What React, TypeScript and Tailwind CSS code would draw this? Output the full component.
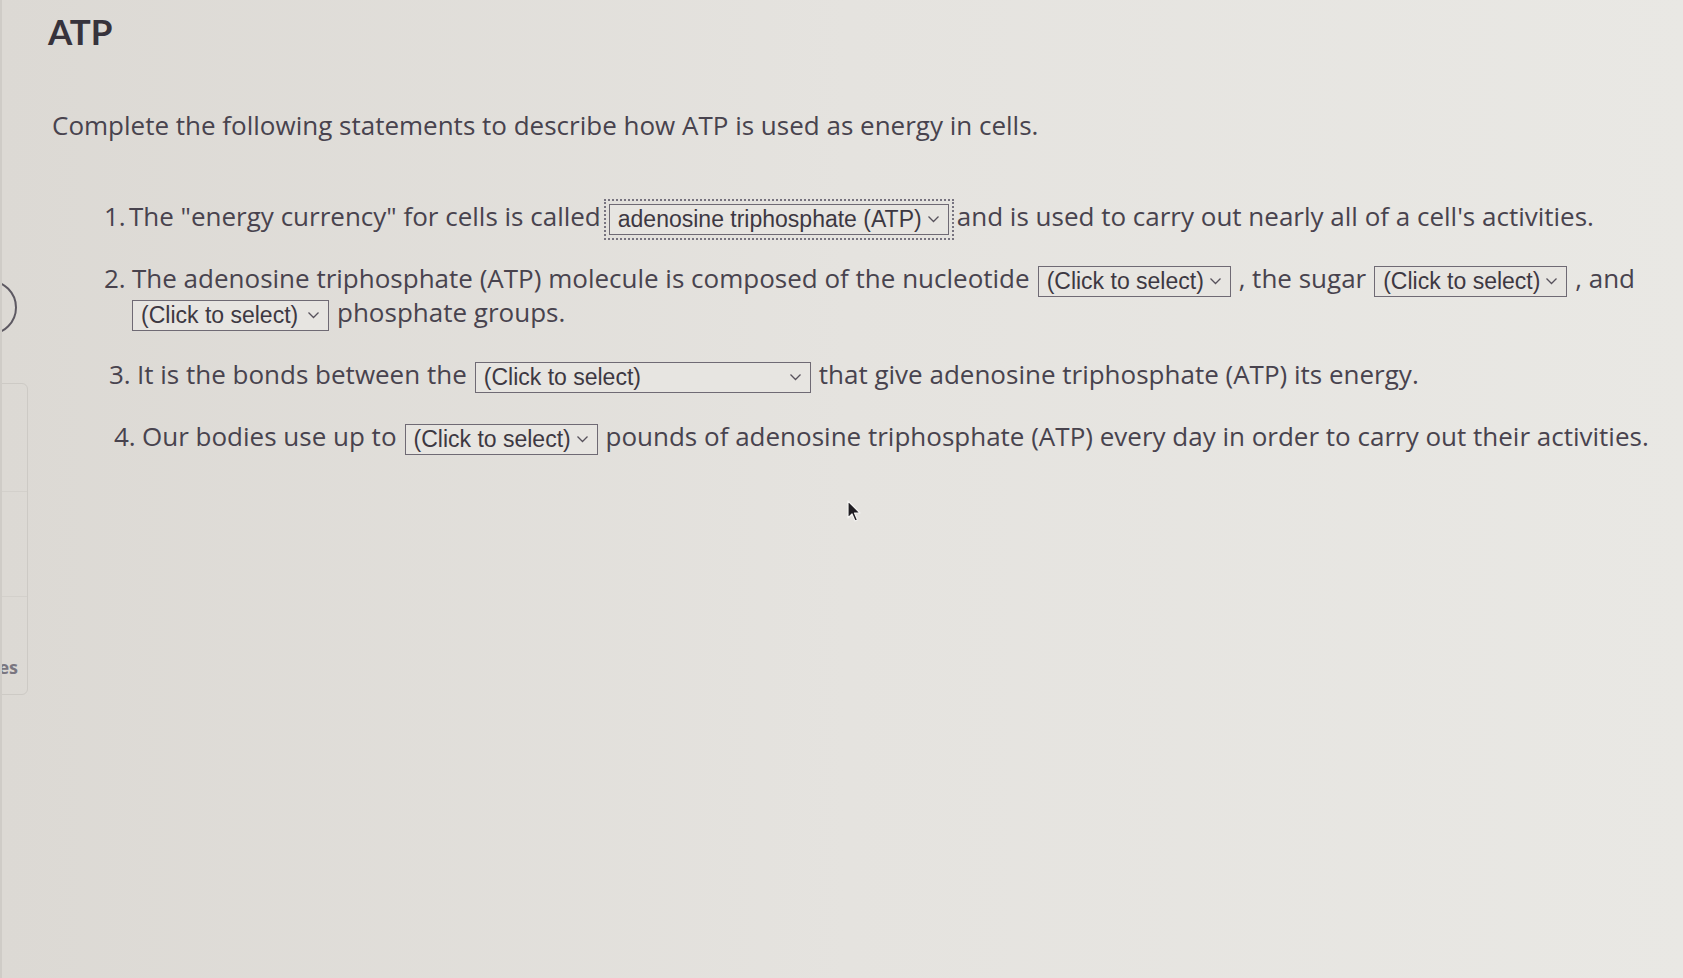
import React from 'react';

const Chevron: React.FC = () => (
    <svg width="13" height="8" viewBox="0 0 13 8" className="shrink-0">
        <path d="M1.5 1.5 L6.5 6.5 L11.5 1.5" stroke="#57525c" strokeWidth="1.3" fill="none" />
    </svg>
);

type DropProps = { label: string; width: string; focused?: boolean };

const Drop: React.FC<DropProps> = ({ label, width, focused }) => (
    <span
        className={`inline-flex items-center justify-between h-[31px] -my-[4px] align-middle mx-[8px] px-[8px] border border-[#6f6a74] bg-[#e7e5e1] text-[23px] text-[#3d3842] leading-none ${width} ${focused ? 'outline-2 outline-dotted outline-offset-[3px] outline-[#77737f]' : ''}`}
        style={{ fontFamily: '"Liberation Sans", Arial, sans-serif' }}
    >
        <span className="whitespace-nowrap">{label}</span>
        <Chevron />
    </span>
);

const SideSliver: React.FC = () => (
    <aside className="w-[36px] shrink-0 overflow-hidden flex flex-col">
        <div className="mt-[280px] -ml-[40px] w-[55px] h-[55px] shrink-0 rounded-full border-2 border-[#5d5962]" />
        <div className="mt-[48px] -ml-[40px] w-[66px] h-[312px] shrink-0 rounded-md border border-[#cdcac5] flex flex-col">
            <div className="h-[108px] shrink-0 border-b border-[#d3d0cb]" />
            <div className="h-[105px] shrink-0 border-b border-[#d3d0cb]" />
            <div className="flex-1 flex items-end justify-end pr-[9px] pb-[16px]">
                <span className="text-[18px] leading-[22px] font-bold text-[#7a7680]" style={{ fontFamily: '"Open Sans", sans-serif' }}>es</span>
            </div>
        </div>
    </aside>
);

const Cursor: React.FC = () => (
    <svg width="16" height="24" viewBox="0 0 16 24" className="absolute left-[845px] top-[500px]">
        <path d="M1 1 L1 18 L5 14 L8 21 L10.5 20 L7.5 13 L13 13 Z" fill="#1f1d22" stroke="#f4f3f1" strokeWidth="1.2" strokeLinejoin="round" />
    </svg>
);

export default function App() {
    return (
        <div
            className="relative w-full min-h-[978px] flex border-l-2 border-[#cfccc7] bg-gradient-to-r from-[#dcd9d4] via-[#e5e3df] to-[#e9e8e4] text-[#48434e]"
            style={{ fontFamily: '"Open Sans", Lato, sans-serif' }}
        >
            <SideSliver />
            <main className="flex-1 pl-[10px] pt-[11px]">
                <h1 className="text-[35px] leading-[40px] font-bold text-[#37333c]" style={{ fontFamily: 'Lato, sans-serif' }}>ATP</h1>

                <p className="mt-[57px] ml-[4px] text-[26px] leading-[34px]">
                    Complete the following statements to describe how ATP is used as energy in cells.
                </p>

                <ol className="mt-[57px] flex flex-col gap-[28px] text-[26px] leading-[34px]">
                    <li className="flex ml-[56px] whitespace-nowrap">
                        <span className="w-[25px] shrink-0">1.</span>
                        <span>
                            The "energy currency" for cells is called
                            <Drop label="adenosine triphosphate (ATP)" width="w-[340px]" focused />
                            and is used to carry out nearly all of a cell's activities.
                        </span>
                    </li>
                    <li className="flex ml-[56px] whitespace-nowrap">
                        <span className="w-[28px] shrink-0">2.</span>
                        <span>
                            The adenosine triphosphate (ATP) molecule is composed of the nucleotide
                            <Drop label="(Click to select)" width="w-[193px]" />
                            , the sugar
                            <Drop label="(Click to select)" width="w-[193px]" />
                            , and
                            <br />
                            <span className="-ml-[8px]">
                                <Drop label="(Click to select)" width="w-[197px]" />
                            </span>
                            phosphate groups.
                        </span>
                    </li>
                    <li className="flex ml-[61px] whitespace-nowrap">
                        <span className="w-[28px] shrink-0">3.</span>
                        <span>
                            It is the bonds between the
                            <Drop label="(Click to select)" width="w-[336px]" />
                            that give adenosine triphosphate (ATP) its energy.
                        </span>
                    </li>
                    <li className="flex ml-[66px] whitespace-nowrap">
                        <span className="w-[28px] shrink-0">4.</span>
                        <span>
                            Our bodies use up to
                            <Drop label="(Click to select)" width="w-[193px]" />
                            pounds of adenosine triphosphate (ATP) every day in order to carry out their activities.
                        </span>
                    </li>
                </ol>
            </main>
            <Cursor />
        </div>
    );
}
